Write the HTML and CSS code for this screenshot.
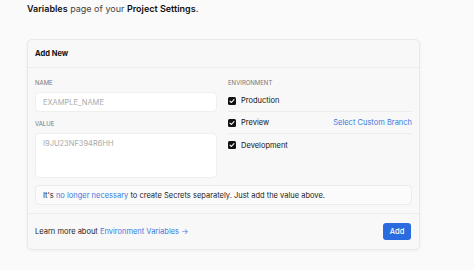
FILE: index.html
```html
<html>
  <head>
    <link rel="stylesheet" href="styles.css">
  </head>
  <body>
    <div class="page">
      <p class="intro"><strong>Variables</strong> page of your <strong>Project Settings</strong>.</p>

      <div class="card">
        <div class="card-header">Add New</div>

        <div class="card-body">
          <div class="fields">
            <div class="field-col">
              <label>Name</label>
              <input type="text" class="text-input" placeholder="EXAMPLE_NAME">

              <label class="second">Value</label>
              <textarea class="text-area" placeholder="I9JU23NF394R6HH"></textarea>
            </div>

            <div class="field-col">
              <label class="env-label">Environment</label>
              <div class="env-row">
                <span class="check"><svg viewBox="0 0 8 8"><path d="M2 4.2L3.4 5.5L6 2.6" /></svg></span>
                <span>Production</span>
              </div>
              <div class="env-row">
                <span class="check"><svg viewBox="0 0 8 8"><path d="M2 4.2L3.4 5.5L6 2.6" /></svg></span>
                <span>Preview</span>
                <a class="link branch-link">Select Custom Branch</a>
              </div>
              <div class="env-row">
                <span class="check"><svg viewBox="0 0 8 8"><path d="M2 4.2L3.4 5.5L6 2.6" /></svg></span>
                <span>Development</span>
              </div>
            </div>
          </div>

          <div class="notice">
            <span>It's <a class="link">no longer necessary</a> to create Secrets separately. Just add the value above.</span>
          </div>
        </div>

        <div class="card-footer">
          <span>Learn more about <a class="link">Environment Variables →</a></span>
          <button class="add-button">Add</button>
        </div>
      </div>
    </div>
  </body>
</html>
```

FILE: styles.css
```css
* {
  box-sizing: border-box;
  margin: 0;
  padding: 0;
}

body {
  background: #fafafa;
  font-family: 'Inter', sans-serif;
  color: #111;
}

.page {
  padding: 0 27px;
}

.intro {
  font-size: 9px;
  line-height: 18px;
  color: #444;
}

.intro strong {
  color: #111;
  font-weight: 600;
}

.card {
  width: 393px;
  margin-top: 21px;
  background: #f8f8f8;
  border: 1px solid #e9e9e9;
  border-radius: 5px;
  box-shadow: 0 1px 3px rgba(0, 0, 0, 0.06);
}

.card-header {
  height: 28px;
  padding: 0 7px;
  display: flex;
  align-items: center;
  font-size: 7.5px;
  font-weight: 700;
  border-bottom: 1px solid #ececec;
}

.card-body {
  padding: 9px 7px 8px;
  border-bottom: 1px solid #ececec;
}

.fields {
  display: grid;
  grid-template-columns: 182px 1fr;
  gap: 11px;
}

label {
  display: block;
  font-size: 6px;
  line-height: 10px;
  text-transform: uppercase;
  color: #777;
  margin-bottom: 4px;
  margin-top: 1px;
}

label.env-label {
  margin-bottom: 2px;
}

label.second {
  margin-top: 7px;
}

.text-input,
.text-area {
  display: block;
  width: 100%;
  background: #fff;
  border: 1px solid #efefef;
  border-radius: 4px;
  font-family: 'Inter', sans-serif;
  font-size: 7.5px;
  padding: 0 7px;
  color: #111;
  outline: none;
  resize: none;
}

.text-input {
  height: 20px;
}

.text-area {
  height: 45px;
  padding-top: 5px;
}

.text-input::placeholder,
.text-area::placeholder {
  color: #aaa;
}

.env-row {
  height: 22px;
  display: flex;
  align-items: center;
  gap: 5px;
  font-size: 7.5px;
  border-bottom: 1px solid #ececec;
}

.env-row:last-child {
  border-bottom: none;
}

.check {
  width: 8px;
  height: 8px;
  border-radius: 1.5px;
  background: #111;
  display: flex;
}

.check svg {
  width: 8px;
  height: 8px;
}

.check path {
  fill: none;
  stroke: #fff;
  stroke-width: 1.1;
  stroke-linecap: round;
  stroke-linejoin: round;
}

.link {
  color: #3a78dd;
  text-decoration: none;
}

.branch-link {
  margin-left: auto;
}

.notice {
  margin-top: 7px;
  height: 20px;
  display: flex;
  align-items: center;
  padding: 0 7px;
  background: #fbfbfb;
  border: 1px solid #ececec;
  border-radius: 4px;
  font-size: 7.5px;
  color: #222;
}

.card-footer {
  height: 35px;
  padding: 0 8px 0 7px;
  display: flex;
  align-items: center;
  justify-content: space-between;
  font-size: 7.5px;
  color: #222;
}

.add-button {
  width: 28px;
  height: 17px;
  background: #2a6be0;
  color: #fff;
  border: none;
  border-radius: 3px;
  font-family: 'Inter', sans-serif;
  font-size: 7.5px;
  font-weight: 500;
}
```
